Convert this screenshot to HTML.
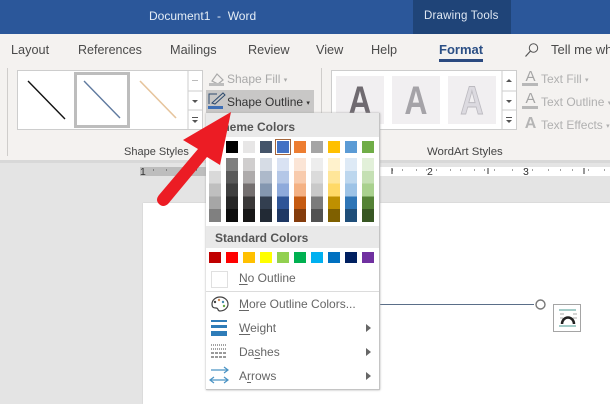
<!DOCTYPE html>
<html><head><meta charset="utf-8">
<style>
html,body{margin:0;padding:0;background:#e4e4e4}
body{width:610px;height:404px;overflow:hidden;position:relative;background:#e4e4e4;font-family:"Liberation Sans",sans-serif}
#w{position:absolute;left:0;top:0;width:610px;height:404px;overflow:hidden;filter:blur(.3px)}
.a{position:absolute}
.t{position:absolute;white-space:nowrap;line-height:16px;height:16px}
.s{position:absolute;width:12px}
.d{font-size:7px;vertical-align:1px}
.w{position:absolute;width:48px;height:40px;line-height:40px;font-size:40px;font-weight:bold;text-align:center;transform:scaleX(.8)}
u{text-decoration-thickness:1px;text-underline-offset:2px}
</style></head><body><div id="w">
<div class="a" style="left:0;top:0;width:610px;height:34px;background:#2b579a"></div>
<div class="a" style="left:413px;top:0;width:98px;height:34px;background:#1f4478"></div>
<div class="t" style="left:149px;top:8px;font-size:12px;color:#e4edf6">Document1 &nbsp;- &nbsp;Word</div>
<div class="t" style="left:424px;top:8px;font-size:11.5px;color:#dfe8f3;letter-spacing:.2px">Drawing Tools</div>

<div class="a" style="left:0;top:34px;width:610px;height:126px;background:#f4f2f0"></div>
<div class="a" style="left:0;top:160px;width:610px;height:3px;background:#d8d8d8"></div>
<div class="t" style="left:11px;top:42px;font-size:12.7px;color:#4a4a4a">Layout</div>
<div class="t" style="left:78px;top:42px;font-size:12.5px;color:#4a4a4a">References</div>
<div class="t" style="left:170px;top:42px;font-size:12.7px;color:#4a4a4a">Mailings</div>
<div class="t" style="left:248px;top:42px;font-size:12.7px;color:#4a4a4a">Review</div>
<div class="t" style="left:316px;top:42px;font-size:12.7px;color:#4a4a4a">View</div>
<div class="t" style="left:371px;top:42px;font-size:12.7px;color:#4a4a4a">Help</div>
<div class="t" style="left:439px;top:42px;font-size:13px;color:#2b4f85;font-weight:bold">Format</div>
<div class="a" style="left:439px;top:59px;width:44px;height:3px;background:#2b4a80"></div>
<svg class="a" style="left:524px;top:42px" width="16" height="16"><circle cx="9.500" cy="6" r="4.200" fill="none" stroke="#555" stroke-width="1"/><path d="M6.500 9 L1.500 14.500" stroke="#555" stroke-width="1.200"/></svg>
<div class="t" style="left:551px;top:42px;font-size:13px;color:#4a4a4a">Tell me wh</div>

<div class="a" style="left:7px;top:68px;width:1px;height:88px;background:#cfcdcb"></div>
<div class="a" style="left:321px;top:68px;width:1px;height:88px;background:#cfcdcb"></div>

<!-- Shape gallery -->
<div class="a" style="left:17px;top:70px;width:184px;height:58px;background:#fff;border:1px solid #cdcdcd"></div>
<div class="a" style="left:74px;top:72px;width:50px;height:50px;border:3px solid #bdbdbd;background:#fff"></div>
<svg class="a" style="left:0;top:60px" width="210" height="80">
<path d="M28 21 L65 59" stroke="#111" stroke-width="1.400"/>
<path d="M84 21 L120 58" stroke="#5f7a9f" stroke-width="1.400"/>
<path d="M140 21 L176 58" stroke="#e6c49c" stroke-width="1.600"/>
<path d="M188 10V69M188 31H202M188 50H202" stroke="#cdcdcd" fill="none"/>
<path d="M192 20.500H198" stroke="#bbb"/>
<path d="M192 40L198 40L195 43Z" fill="#555"/>
<path d="M192 57.500H198" stroke="#555"/><path d="M192 60L198 60L195 63Z" fill="#555"/>
</svg>

<!-- Shape fill / outline -->
<div class="a" style="left:206px;top:90px;width:108px;height:23px;background:#c8c7c6"></div>
<svg class="a" style="left:207px;top:69px" width="20" height="44">
<path d="M5 12 L10 5 L16 11 L11 15 Z" fill="none" stroke="#aaa" stroke-width="1.200"/><path d="M2 14h15v3H2z" fill="#bdbdbd"/>
<path d="M2 35V25H10M5 34L16 24L18 26L8 35Z" fill="none" stroke="#2f4b6e" stroke-width="1"/><path d="M1 37h15v3H1z" fill="#3f6fb5"/>
</svg>
<div class="t" style="left:227px;top:71px;font-size:12px;color:#a9a9a9">Shape Fill <span class="d">▾</span></div>
<div class="t" style="left:227px;top:94px;font-size:12px;color:#333">Shape Outline <span class="d">▾</span></div>
<div class="t" style="left:124px;top:144px;font-size:11px;color:#444">Shape Styles</div>

<!-- WordArt gallery -->
<div class="a" style="left:331px;top:70px;width:184px;height:58px;background:#fff;border:1px solid #cdcdcd"></div>
<div class="a" style="left:336px;top:76px;width:48px;height:48px;background:#f1eff1"></div>
<div class="a" style="left:392px;top:76px;width:48px;height:48px;background:#f1eff1"></div>
<div class="a" style="left:448px;top:76px;width:48px;height:48px;background:#f1eff1"></div>
<div class="w" style="left:336px;top:81px;color:#6f6a70">A</div>
<div class="w" style="left:392px;top:81px;color:#a5a3a8">A</div>
<div class="w" style="left:448px;top:81px;color:#dcdae0;-webkit-text-stroke:1px #bcbac0">A</div>
<svg class="a" style="left:500px;top:60px" width="20" height="80">
<path d="M2 10V69M2 31H16M2 50H16" stroke="#cdcdcd" fill="none"/>
<path d="M6 22L12 22L9 19Z" fill="#555"/>
<path d="M6 40L12 40L9 43Z" fill="#555"/>
<path d="M6 57.500H12" stroke="#555"/><path d="M6 60L12 60L9 63Z" fill="#555"/>
</svg>
<div class="t" style="left:523px;top:69px;width:15px;font-size:15px;color:#a5a5a5;text-align:center">A</div>
<div class="a" style="left:522px;top:83px;width:16px;height:3px;background:#b8b8b8"></div>
<div class="t" style="left:523px;top:91px;width:15px;font-size:15px;color:#a5a5a5;text-align:center">A</div>
<div class="a" style="left:522px;top:106px;width:16px;height:3px;background:#b8b8b8"></div>
<div class="t" style="left:523px;top:116px;width:15px;font-size:16px;font-weight:bold;color:#b5b5b5;text-align:center">A</div>
<div class="t" style="left:541px;top:71px;font-size:12px;color:#b0b0b0">Text Fill <span class="d">▾</span></div>
<div class="t" style="left:541px;top:94px;font-size:12px;color:#b0b0b0">Text Outline <span class="d">▾</span></div>
<div class="t" style="left:541px;top:117px;font-size:12px;color:#b0b0b0">Text Effects <span class="d">▾</span></div>
<div class="t" style="left:427px;top:144px;font-size:11.400px;color:#444">WordArt Styles</div>

<!-- Ruler -->
<div class="a" style="left:140px;top:167px;width:66px;height:9px;background:#bdbdbd"></div>
<div class="a" style="left:379px;top:167px;width:231px;height:9px;background:#fff"></div>
<svg class="a" style="left:130px;top:165px" width="480" height="12">
<path d="M23 6h1M36 6h1M52 6h1M66 6h1M382 6h1M394 6h1M402 6h1M418 6h1M430 6h1M442 6h1M458 6h1M474 6h1M262 6h1M272 6h1M286 6h1M296 6h1M306 6h1M320 6h1M330 6h1M344 6h1M354 6h1M364 6h1" stroke="#444" stroke-width="1" stroke-dasharray="1 1" transform="translate(0,-1)"/>
<path d="M262 3v6M358 3v6M454 3v6" stroke="#333"/>
</svg>
<div class="t" style="left:140px;top:164px;font-size:10.500px;color:#333">1</div>
<div class="t" style="left:427px;top:164px;font-size:10.500px;color:#333">2</div>
<div class="t" style="left:523px;top:164px;font-size:10.500px;color:#333">3</div>

<!-- Page -->
<div class="a" style="left:143px;top:203px;width:467px;height:201px;background:#fff;box-shadow:0 0 1px #bbb"></div>
<svg class="a" style="left:370px;top:290px" width="240" height="70">
<path d="M10 14.500H164" stroke="#5a6e88" stroke-width="1"/>
<circle cx="170.500" cy="14.500" r="4.500" fill="#fff" stroke="#777" stroke-width="1.400"/>
<rect x="183.500" y="14.500" width="27" height="27" fill="#fff" stroke="#a5a5a5"/>
<path d="M189 20H206M189 36H206" stroke="#4a9a90"/>
<path d="M190 28H193M203 28H207M190 24H194M203 24H207" stroke="#aaa"/>
<path d="M192 34A5.500 6 0 0 1 204 34" fill="none" stroke="#222" stroke-width="2.500"/>
</svg>

<!-- Menu -->
<div class="a" style="left:206px;top:113px;width:173px;height:276px;background:#fff;border-right:1px solid #c4c4c4;border-bottom:1px solid #c4c4c4;box-shadow:0 0 2px #aaa"></div>
<div class="a" style="left:206px;top:113px;width:173px;height:24px;background:#e9e9e9"></div>
<div class="a" style="left:206px;top:226px;width:173px;height:22px;background:#e9e9e9"></div>
<div class="t" style="left:215px;top:119px;font-size:12px;font-weight:bold;color:#555">Theme Colors</div>
<div class="t" style="left:215px;top:230px;font-size:12px;font-weight:bold;color:#555">Standard Colors</div>

<!-- Theme top -->
<div class="s" style="left:226px;top:141px;height:12px;background:#000"></div>
<div class="s" style="left:243px;top:141px;height:12px;background:#e7e6e6"></div>
<div class="s" style="left:260px;top:141px;height:12px;background:#44546a"></div>
<div class="s" style="left:277px;top:141px;height:12px;background:#4472c4;box-shadow:0 0 0 1px #fff,0 0 0 2px #a5663c"></div>
<div class="s" style="left:294px;top:141px;height:12px;background:#ed7d31"></div>
<div class="s" style="left:311px;top:141px;height:12px;background:#a5a5a5"></div>
<div class="s" style="left:328px;top:141px;height:12px;background:#ffc000"></div>
<div class="s" style="left:345px;top:141px;height:12px;background:#5b9bd5"></div>
<div class="s" style="left:362px;top:141px;height:12px;background:#70ad47"></div>

<!-- Theme shades -->
<div class="s" style="left:209px;top:158px;height:64px;background:linear-gradient(#f2f2f2 0 20%,#d9d9d9 20% 40%,#bfbfbf 40% 60%,#a6a6a6 60% 80%,#808080 80%)"></div>
<div class="s" style="left:226px;top:158px;height:64px;background:linear-gradient(#7f7f7f 0 20%,#595959 20% 40%,#3f3f3f 40% 60%,#262626 60% 80%,#0d0d0d 80%)"></div>
<div class="s" style="left:243px;top:158px;height:64px;background:linear-gradient(#d0cece 0 20%,#aeabab 20% 40%,#757070 40% 60%,#3a3838 60% 80%,#171616 80%)"></div>
<div class="s" style="left:260px;top:158px;height:64px;background:linear-gradient(#d6dce5 0 20%,#adb9ca 20% 40%,#8497b0 40% 60%,#333f50 60% 80%,#222a35 80%)"></div>
<div class="s" style="left:277px;top:158px;height:64px;background:linear-gradient(#d9e2f3 0 20%,#b4c7e7 20% 40%,#8eaadb 40% 60%,#2f5597 60% 80%,#1f3864 80%)"></div>
<div class="s" style="left:294px;top:158px;height:64px;background:linear-gradient(#fbe5d6 0 20%,#f8cbad 20% 40%,#f4b183 40% 60%,#c55a11 60% 80%,#843c0c 80%)"></div>
<div class="s" style="left:311px;top:158px;height:64px;background:linear-gradient(#ededed 0 20%,#dbdbdb 20% 40%,#c9c9c9 40% 60%,#7b7b7b 60% 80%,#525252 80%)"></div>
<div class="s" style="left:328px;top:158px;height:64px;background:linear-gradient(#fff2cc 0 20%,#ffe699 20% 40%,#ffd966 40% 60%,#bf9000 60% 80%,#7f6000 80%)"></div>
<div class="s" style="left:345px;top:158px;height:64px;background:linear-gradient(#deeaf6 0 20%,#bdd7ee 20% 40%,#9dc3e6 40% 60%,#2e75b6 60% 80%,#1f4e79 80%)"></div>
<div class="s" style="left:362px;top:158px;height:64px;background:linear-gradient(#e2f0d9 0 20%,#c5e0b4 20% 40%,#a9d18e 40% 60%,#548235 60% 80%,#385723 80%)"></div>

<!-- Standard -->
<div class="s" style="left:209px;top:252px;height:11px;background:#c00000"></div>
<div class="s" style="left:226px;top:252px;height:11px;background:#f00"></div>
<div class="s" style="left:243px;top:252px;height:11px;background:#ffc000"></div>
<div class="s" style="left:260px;top:252px;height:11px;background:#ff0"></div>
<div class="s" style="left:277px;top:252px;height:11px;background:#92d050"></div>
<div class="s" style="left:294px;top:252px;height:11px;background:#00b050"></div>
<div class="s" style="left:311px;top:252px;height:11px;background:#00b0f0"></div>
<div class="s" style="left:328px;top:252px;height:11px;background:#0070c0"></div>
<div class="s" style="left:345px;top:252px;height:11px;background:#002060"></div>
<div class="s" style="left:362px;top:252px;height:11px;background:#7030a0"></div>

<!-- Menu items -->
<div class="a" style="left:211px;top:271px;width:15px;height:15px;border:1px solid #e0e0e0"></div>
<div class="a" style="left:206px;top:291px;width:173px;height:1px;background:#dcdcdc"></div>
<div class="t" style="left:239px;top:270px;font-size:12px;color:#666"><u>N</u>o Outline</div>
<div class="t" style="left:239px;top:296px;font-size:12px;color:#666"><u>M</u>ore Outline Colors...</div>
<div class="t" style="left:239px;top:320px;font-size:12px;color:#666"><u>W</u>eight</div>
<div class="t" style="left:239px;top:344px;font-size:12px;color:#666">Da<u>s</u>hes</div>
<div class="t" style="left:239px;top:368px;font-size:12px;color:#666">A<u>r</u>rows</div>
<svg class="a" style="left:206px;top:295px" width="173" height="94">
<path d="M6 9A8 7 0 1 1 14 16C11 16 13 13 10 13C7 13 6 12 6 9Z" fill="none" stroke="#444" stroke-width="1.200"/>
<circle cx="9" cy="7" r="1.200" fill="#444"/><circle cx="13" cy="5" r="1.200" fill="#c85"/><circle cx="17" cy="7" r="1.200" fill="#48a"/><circle cx="18" cy="11" r="1.200" fill="#6a4"/>
<path d="M5 25h16v2H5zM5 30h16v3H5zM5 36h16v5H5z" fill="#2e7cb8"/>
<path d="M5 50h16M5 54h16" stroke="#444" stroke-dasharray="1 1"/><path d="M5 58h16M5 62h16" stroke="#333" stroke-dasharray="3 1"/>
<path d="M5 75H21M5 85H21" stroke="#4a93c4" stroke-width="1.200"/>
<path d="M18 72L22 75L18 78M8 82L4 85L8 88M18 82L22 85L18 88" fill="none" stroke="#4a93c4" stroke-width="1.200"/>
<path d="M160 29L165 33L160 37ZM160 53L165 57L160 61ZM160 77L165 81L160 85Z" fill="#666"/>
</svg>

<!-- Red arrow -->
<svg class="a" style="left:0;top:0" width="610" height="404">
<path d="M231 112 L183 140 L198 149 L159 195 Q155 200 159 204 Q163 208 168 204 L207 157 L220 165 Z" fill="#ec1c24"/>
</svg>
</div></body></html>
